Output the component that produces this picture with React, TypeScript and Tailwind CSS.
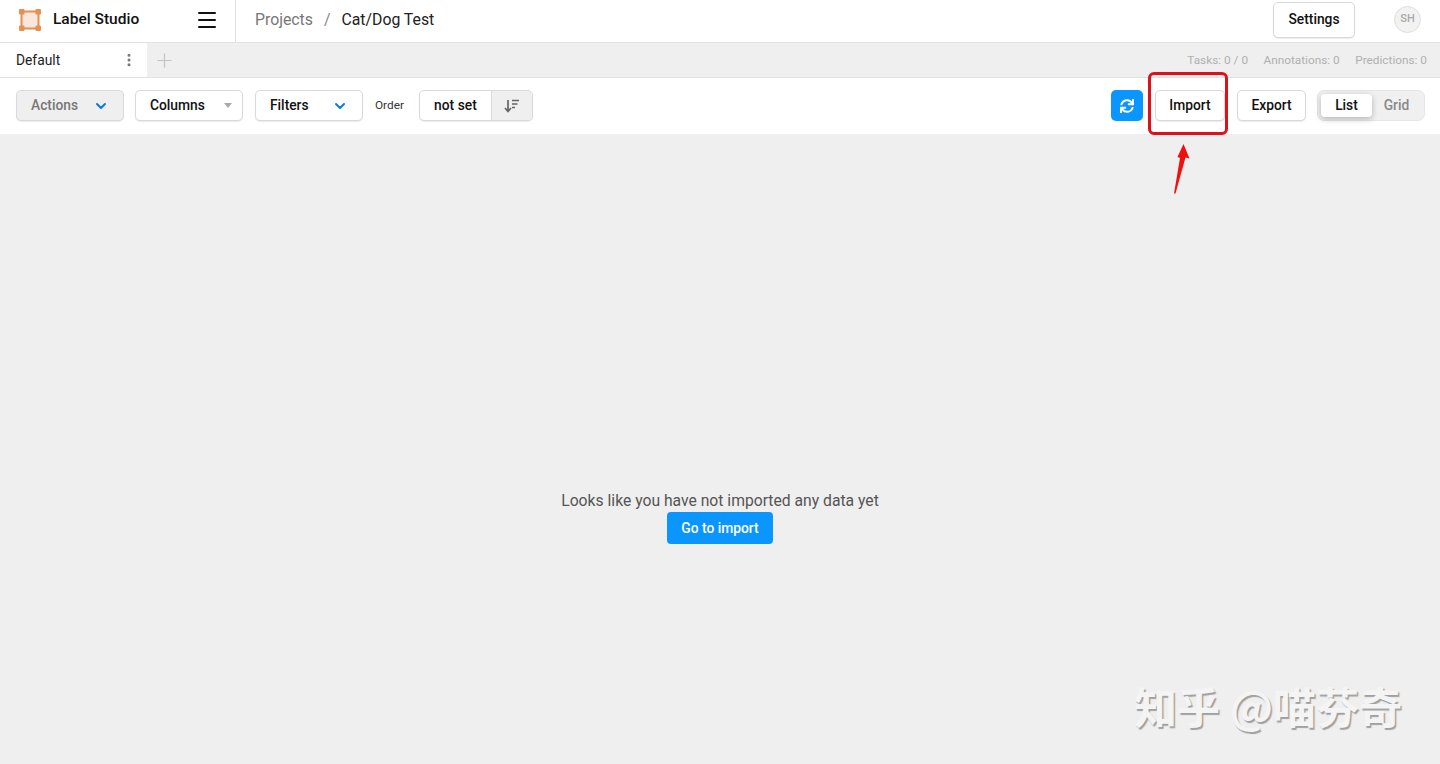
import React from 'react';
import { ChevronDown, Menu, MoreVertical, Plus } from 'lucide-react';
import { FaSync } from 'react-icons/fa';

const btn =
  'h-[31px] flex items-center bg-white border border-[#d9d9d9] rounded-[5px] text-[13.8px] font-medium text-[#111] shadow-[0_1px_1px_rgba(0,0,0,0.08)]';

const Chevron = () => <ChevronDown size={16} strokeWidth={3} className="text-[#0b79e0]" />;

const Logo = () => (
  <svg width="24" height="24" viewBox="0 0 24 24">
    <rect x="3.5" y="3.5" width="17" height="17" fill="#fbe6dc" stroke="#e58f50" strokeWidth="2" />
    <rect x="1" y="1" width="5.5" height="5.5" rx="1.2" fill="#e58f50" />
    <rect x="17.5" y="1" width="5.5" height="5.5" rx="1.2" fill="#e58f50" />
    <rect x="1" y="17.5" width="5.5" height="5.5" rx="1.2" fill="#e58f50" />
    <rect x="17.5" y="17.5" width="5.5" height="5.5" rx="1.2" fill="#e58f50" />
  </svg>
);

const SortIcon = () => (
  <svg width="16" height="14" viewBox="0 0 16 14" fill="none" stroke="#666" strokeWidth="1.7">
    <path d="M4 1 V12 M1 9 L4 12.5 L7 9" />
    <path d="M8 1.5 H15 M8 5 H13.5 M8 8.5 H11" />
  </svg>
);

export default function App() {
  return (
    <div className="h-[764px] flex flex-col bg-[#efefef] overflow-hidden font-['Roboto',sans-serif] relative">
      {/* top bar */}
      <header className="h-[43px] flex items-center bg-white border-b border-[#e2e2e2]">
        <div className="w-[236px] h-full flex items-center border-r border-[#e2e2e2] pl-[18px] pr-[16px] pb-[3px]">
          <Logo />
          <span className="ml-[11px] text-[15.5px] font-medium text-[#111]">Label Studio</span>
          <Menu size={24} strokeWidth={2} className="ml-auto text-[#111]" />
        </div>
        <nav className="flex items-center pl-[19px] pb-[3px] text-[15.8px]">
          <span className="text-[#777]">Projects</span>
          <span className="mx-[11px] text-[#888]">/</span>
          <span className="text-[#222]">Cat/Dog Test</span>
        </nav>
        <div className="ml-auto flex items-center pb-[3px]">
          <button className={`${btn} h-[36px] w-[82px] justify-center`}>Settings</button>
          <div className="ml-[39px] mr-[19px] w-[27px] h-[27px] rounded-full bg-[#f2f2f2] border border-[#dedede] flex items-center justify-center text-[11px] font-medium text-[#aaa]">
            SH
          </div>
        </div>
      </header>

      {/* tabs */}
      <div className="h-[35px] flex items-stretch bg-[#efefef] border-b border-[#e2e2e2]">
        <div className="w-[147px] bg-white flex items-center pl-[16px] pr-[9px] text-[13.8px] text-[#222]">
          Default
          <MoreVertical size={16} strokeWidth={2.5} className="ml-auto text-[#777] -translate-x-[1px]" />
        </div>
        <div className="flex items-center pl-[6px]">
          <Plus size={23} strokeWidth={1.3} className="text-[#c4c4c4]" />
        </div>
        <div className="ml-auto flex items-center gap-[15.5px] pr-[13px] pt-[1px] text-[11.8px] text-[#b0b0b0]">
          <span>Tasks: 0 / 0</span>
          <span>Annotations: 0</span>
          <span>Predictions: 0</span>
        </div>
      </div>

      {/* toolbar */}
      <div className="h-[56px] flex items-center bg-white pl-[16px] pr-[15px] pb-[1px]">
        <button className={`${btn} w-[108px] pl-[14px] pr-[14px] justify-between !bg-[#efefef] !text-[#777]`}>
          Actions
          <Chevron />
        </button>
        <button className={`${btn} ml-[11px] w-[108px] pl-[14px] pr-[10px] justify-between`}>
          Columns
          <span className="w-0 h-0 border-x-[4.5px] border-x-transparent border-t-[5px] border-t-[#aaa]" />
        </button>
        <button className={`${btn} ml-[12px] w-[108px] pl-[14px] pr-[14px] justify-between`}>
          Filters
          <Chevron />
        </button>
        <span className="ml-[12px] text-[11.8px] text-[#333]">Order</span>
        <div className={`${btn} ml-[15px] w-[114px] overflow-hidden`}>
          <span className="w-[71px] text-center">not set</span>
          <span className="flex-1 h-full bg-[#efefef] border-l border-[#d9d9d9] flex items-center justify-center">
            <SortIcon />
          </span>
        </div>

        <button className="ml-auto w-[32px] h-[31px] rounded-[5px] bg-[#0a95ff] flex items-center justify-center text-white">
          <FaSync size={14} />
        </button>
        <button className={`${btn} ml-[12px] w-[70px] justify-center`}>Import</button>
        <button className={`${btn} ml-[12px] w-[69px] justify-center`}>Export</button>
        <div className="ml-[11px] w-[108px] h-[31px] rounded-[7px] bg-[#f0f0f0] border border-[#e6e6e6] flex items-center p-[3px] text-[13.8px] font-medium">
          <span className="w-[51px] h-[23px] rounded-[4px] bg-white shadow-[0_2px_6px_rgba(0,0,0,0.25)] flex items-center justify-center text-[#111]">
            List
          </span>
          <span className="flex-1 text-center text-[#888]">Grid</span>
        </div>
      </div>

      {/* empty state */}
      <main className="flex-1 flex flex-col items-center justify-center pt-[136px]">
        <p className="text-[15.7px] leading-[19px] text-[#555]">Looks like you have not imported any data yet</p>
        <button className="mt-[2px] w-[106px] h-8 pt-[1px] rounded-[4px] bg-[#0a95ff] text-white text-[13.8px] font-medium">
          Go to import
        </button>
      </main>

      {/* annotation over the screenshot */}
      <div className="absolute left-[1148px] top-[72px] w-[80px] h-[63px] border-[3px] border-[#e0101a] rounded-[6px]" />
      <svg className="absolute left-[1165px] top-[140px]" width="30" height="58" viewBox="0 0 30 58">
        <path d="M9 53.5 L15 18 L12.5 17 L18.5 4 L24.5 18.5 L20.5 17.5 L10.5 53.5 Z" fill="#f01010" />
      </svg>

      {/* watermark */}
      <div className="absolute left-[1134px] top-[680px] text-[43px] leading-[50px] font-bold whitespace-nowrap text-[#f4f4f4] [text-shadow:1.5px_1.5px_1px_#a0a0a0] font-['Noto_Sans_CJK_SC','Roboto',sans-serif]">
        知乎 @喵芬奇
      </div>
    </div>
  );
}
